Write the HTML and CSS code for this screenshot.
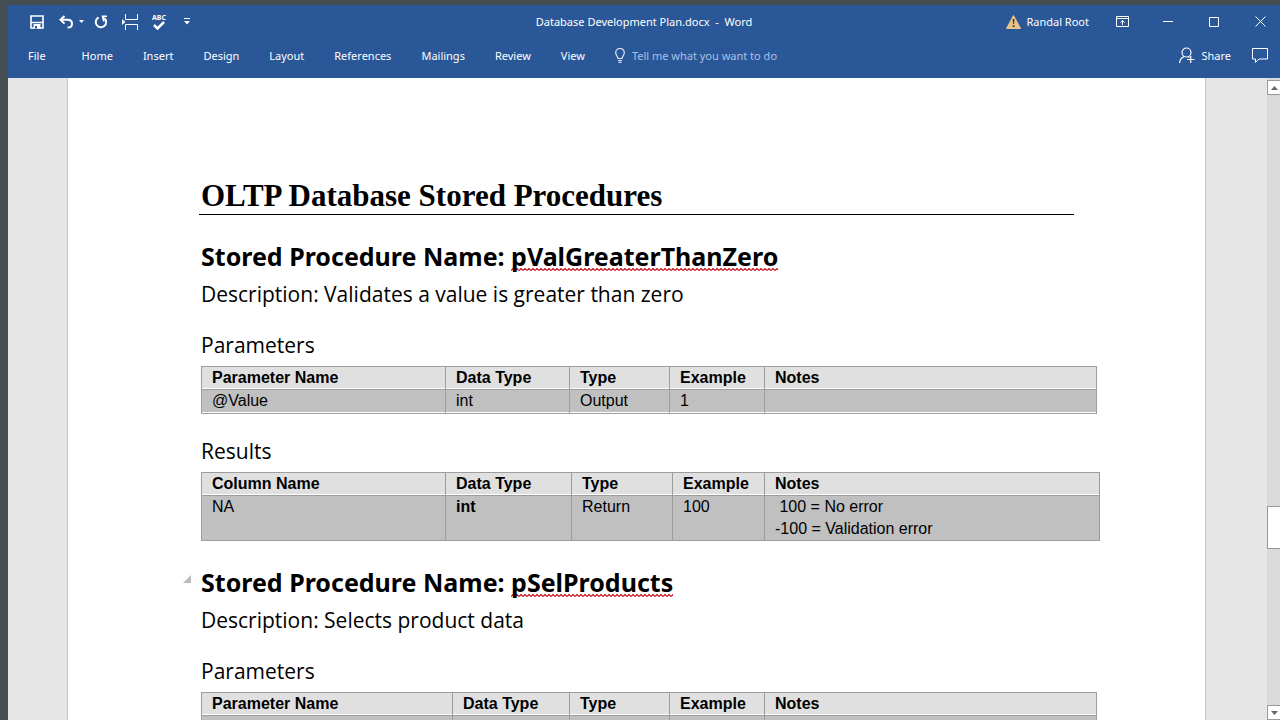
FILE: index.html
```html
<!DOCTYPE html>
<html lang="en">
<head>
    <meta charset="UTF-8">
    <meta name="viewport" content="width=device-width, initial-scale=1.0">
    <title>Database Development Plan.docx - Word</title>
    <link rel="stylesheet" href="styles.css">
</head>
<body>
    <div class="window">
        <header class="title-bar">
            <div class="quick-access">
                <button class="save" aria-label="Save">
                    <svg width="14" height="14" viewBox="0 0 14 14"><path d="M1 1h12v12H1z M1 7.500h12" fill="none" stroke="#fff" stroke-width="1.600"/><path d="M3.500 9h7v4.500h-7z" fill="#fff"/><path d="M5 11h2v2.500H5z" fill="#2a5797"/></svg>
                </button>
                <button class="undo" aria-label="Undo">
                    <svg width="16" height="14" viewBox="0 0 16 14"><path d="M6.500 1L2.500 4.800l4 3.800M3 4.800h6.500c3 0 4.500 1.600 4.500 3.900s-1.700 3.900-4.500 3.900" fill="none" stroke="#fff" stroke-width="2"/></svg>
                </button>
                <button class="undo-more" aria-label="Undo list">
                    <svg width="5" height="3" viewBox="0 0 5 3"><path d="M0 0h5L2.500 3z" fill="#fff"/></svg>
                </button>
                <button class="redo" aria-label="Repeat">
                    <svg width="14" height="14" viewBox="0 0 14 14"><path d="M4.500 2.500A5.200 5.200 0 1 0 10.500 3.300" fill="none" stroke="#fff" stroke-width="2"/><path d="M7.500 0.500H13V2h-2.500v4.500H9z" fill="#fff"/></svg>
                </button>
                <button class="break" aria-label="Page break">
                    <svg width="17" height="16" viewBox="0 0 17 16"><path d="M3.500 0v5.500h12V0 M3.500 16V10.500h12V16" fill="none" stroke="#fff"/><path d="M0 5l3.500 3L0 11z" fill="#fff"/></svg>
                </button>
                <button class="spelling" aria-label="Spelling">
                    <span class="abc">ABC</span>
                    <svg width="12" height="9" viewBox="0 0 12 9"><path d="M1 4l3.500 3.500L11 1" fill="none" stroke="#fff" stroke-width="2.500"/></svg>
                </button>
                <button class="customize" aria-label="Customize toolbar">
                    <svg width="6" height="7" viewBox="0 0 6 7"><path d="M0 .5h6" stroke="#fff"/><path d="M0 3h6L3 6.500z" fill="#fff"/></svg>
                </button>
            </div>
            <div class="doc-title">Database Development Plan.docx&nbsp; -&nbsp; Word</div>
            <div class="title-right">
                <button class="account">
                    <svg width="15" height="14" viewBox="0 0 15 14"><path d="M7.500.5L14.500 13.500H.5z" fill="#e8c48a" stroke="#e8c48a" stroke-linejoin="round"/><path d="M6.700 4h1.800l-.4 5h-1z M6.700 10.200h1.800v1.800H6.700z" fill="#3f3a36"/></svg>
                    Randal Root
                </button>
                <button class="win-btn" aria-label="Ribbon display options">
                    <svg width="13" height="11" viewBox="0 0 13 11"><path d="M.5.5h12v10H.5z M.5 2.500h12 M6.500 9V4.500 M4.500 6.500l2-2 2 2" fill="none" stroke="#fff"/></svg>
                </button>
                <button class="win-btn" aria-label="Minimize">
                    <svg width="10" height="11" viewBox="0 0 10 11"><path d="M0 5.500h10" stroke="#fff"/></svg>
                </button>
                <button class="win-btn" aria-label="Maximize">
                    <svg width="10" height="10" viewBox="0 0 10 10"><path d="M.5.5h9v9h-9z" fill="none" stroke="#fff"/></svg>
                </button>
                <button class="win-btn" aria-label="Close">
                    <svg width="11" height="11" viewBox="0 0 11 11"><path d="M.5.5l10 10M10.500.5l-10 10" stroke="#fff"/></svg>
                </button>
            </div>
        </header>

        <nav class="ribbon">
            <button class="file-tab">File</button>
            <button>Home</button>
            <button>Insert</button>
            <button>Design</button>
            <button>Layout</button>
            <button>References</button>
            <button>Mailings</button>
            <button>Review</button>
            <button>View</button>
            <label class="tell-me">
                <svg width="10" height="15" viewBox="0 0 10 15"><path d="M3 10.500C3 8.500.7 7.500.7 4.700a4.300 4.300 0 0 1 8.600 0C9.300 7.500 7 8.500 7 10.500z M3 12.500h4 M3.500 14.300h3" fill="none" stroke="#dce6f4" stroke-width="1.200"/></svg>
                <input type="text" placeholder="Tell me what you want to do" aria-label="Tell me what you want to do">
            </label>
            <button class="share">
                <svg width="16" height="17" viewBox="0 0 16 17"><circle cx="7.500" cy="5.500" r="4.500" fill="none" stroke="#fff" stroke-width="1.200"/><path d="M.6 16c.2-3.500 2-5.500 4.700-6.300M9 9.500l1.500 1 M8 12.500h7.500 M11.700 9v7" fill="none" stroke="#fff" stroke-width="1.200"/></svg>
                Share
            </button>
            <button class="comments" aria-label="Comments">
                <svg width="16" height="15" viewBox="0 0 16 15"><path d="M.5.5h15v10.500H7L3.500 14.300V11h-3z" fill="none" stroke="#fff"/></svg>
            </button>
        </nav>

        <main class="canvas">
            <article class="page">
                <h1>OLTP Database Stored Procedures</h1>

                <section>
                    <h2>Stored Procedure Name: <span class="misspelled">pValGreaterThanZero</span></h2>
                    <p>Description: Validates a value is greater than zero</p>
                    <h3>Parameters</h3>
                    <table class="params">
                        <colgroup><col class="w-244"><col class="w-124"><col class="w-100"><col class="w-95"><col></colgroup>
                        <thead>
                            <tr><th>Parameter Name</th><th>Data Type</th><th>Type</th><th>Example</th><th>Notes</th></tr>
                        </thead>
                        <tbody>
                            <tr><td>@Value</td><td>int</td><td>Output</td><td>1</td><td></td></tr>
                        </tbody>
                    </table>
                    <h3>Results</h3>
                    <table class="results">
                        <colgroup><col class="w-244"><col class="w-126"><col class="w-101"><col class="w-92"><col></colgroup>
                        <thead>
                            <tr><th>Column Name</th><th>Data Type</th><th>Type</th><th>Example</th><th>Notes</th></tr>
                        </thead>
                        <tbody>
                            <tr><td>NA</td><td><b>int</b></td><td>Return</td><td>100</td><td>&nbsp;100 = No error<br>-100 = Validation error</td></tr>
                        </tbody>
                    </table>
                </section>

                <section>
                    <h2><button class="collapse" aria-label="Collapse section"></button>Stored Procedure Name: <span class="misspelled">pSelProducts</span></h2>
                    <p>Description: Selects product data</p>
                    <h3>Parameters</h3>
                    <table class="params">
                        <colgroup><col class="w-251"><col class="w-117"><col class="w-100"><col class="w-95"><col></colgroup>
                        <thead>
                            <tr><th>Parameter Name</th><th>Data Type</th><th>Type</th><th>Example</th><th>Notes</th></tr>
                        </thead>
                        <tbody>
                            <tr><td>@ProductID</td><td>int</td><td>Output</td><td>1</td><td>Default = Null</td></tr>
                        </tbody>
                    </table>
                </section>
            </article>
            <div class="scrollbar">
                <button aria-label="Scroll up"><svg width="7" height="4" viewBox="0 0 7 4"><path d="M0 4h7L3.500 0z" fill="#666"/></svg></button>
                <div class="track"><div class="thumb"></div></div>
                <button aria-label="Scroll down"><svg width="7" height="4" viewBox="0 0 7 4"><path d="M0 0h7L3.500 4z" fill="#666"/></svg></button>
            </div>
        </main>
    </div>
</body>
</html>
```
FILE: styles.css
```css
* {
    box-sizing: border-box;
}
body {
    margin: 0;
    height: 100vh;
    padding: 5px 0 0 8px;
    overflow: hidden;
    background: #444e52;
    font-family: "Noto Sans", "Open Sans", sans-serif;
}
button {
    padding: 0;
    border: none;
    background: none;
    color: inherit;
    font: inherit;
    cursor: pointer;
}
svg {
    display: block;
}
.window {
    display: flex;
    flex-direction: column;
    height: 100%;
    overflow: hidden;
    background: #2a5797;
    color: #fff;
    font-size: 11px;
}

/* title bar */
.title-bar {
    display: grid;
    grid-template-columns: 1fr auto 1fr;
    align-items: center;
    height: 33px;
}
.quick-access {
    display: flex;
    align-items: center;
    padding-left: 22px;
}
.undo {
    margin-left: 14px;
}
.undo-more {
    margin-left: 5px;
}
.redo {
    margin-left: 10px;
}
.break {
    margin-left: 14px;
}
.spelling {
    display: flex;
    flex-direction: column;
    align-items: center;
    margin-left: 13px;
}
.abc {
    font-size: 7px;
    font-weight: bold;
    line-height: 7px;
}
.customize {
    margin-left: 18px;
}
.title-right {
    display: flex;
    justify-content: flex-end;
    align-items: center;
    margin-right: -3px;
}
.account {
    display: flex;
    align-items: center;
    gap: 5px;
    margin-right: 10px;
}
.win-btn {
    display: flex;
    justify-content: center;
    align-items: center;
    width: 46px;
    height: 32px;
}

/* ribbon tabs */
.ribbon {
    display: flex;
    align-items: center;
    gap: 30px;
    height: 40px;
    padding: 0 12px 5px 20px;
}
.file-tab {
    margin-right: 6px;
}
.tell-me {
    display: flex;
    flex: 1;
    align-items: center;
    gap: 7px;
}
.tell-me input {
    flex: 1;
    padding: 0;
    border: none;
    outline: none;
    background: none;
    color: #fff;
    font: inherit;
}
.tell-me input::placeholder {
    color: #a9c1e6;
}
.share {
    display: flex;
    align-items: center;
    gap: 6px;
}
.comments {
    margin-left: -9px;
}

/* document */
.canvas {
    display: flex;
    flex: 1;
    min-height: 0;
    padding-left: 59px;
    background: #e6e6e6;
}
.page {
    flex: 1;
    margin-right: 61px;
    padding: 100px 131px 0 133px;
    overflow: hidden;
    border: solid #c6c6c6;
    border-width: 0 1px;
    background: #fff;
    color: #000;
}
h1 {
    margin: 0 0 23px -2px;
    padding-left: 2px;
    border-bottom: 1px solid #000;
    font: bold 31px/36px "Liberation Serif", serif;
}
h2 {
    position: relative;
    margin: 0;
    font-size: 25px;
    line-height: 36px;
}
p, h3 {
    margin: 0;
    font-family: "Open Sans", "Noto Sans", sans-serif;
    font-size: 21px;
    font-weight: normal;
    line-height: 40px;
}
h3 {
    margin: 15px 0 5px;
    line-height: 32px;
}
.misspelled {
    background: url("data:image/svg+xml,%3Csvg xmlns='http://www.w3.org/2000/svg' width='4' height='3'%3E%3Cpath d='M0 2.500L2 .5L4 2.500' fill='none' stroke='%23c8101c' stroke-width='1.200'/%3E%3C/svg%3E") repeat-x left bottom 2px;
}
.collapse {
    position: absolute;
    left: -18px;
    top: 11px;
    width: 8px;
    height: 8px;
    background: #bbb;
    clip-path: polygon(100% 0, 100% 100%, 0 100%);
}

table {
    border-collapse: collapse;
    table-layout: fixed;
    font: 16px/22px "Liberation Sans Narrow", "Arial Narrow", "Liberation Sans", sans-serif;
}
.params {
    width: calc(100% + 23px);
    margin-bottom: 21px;
}
.results {
    width: calc(100% + 26px);
    margin-bottom: 23px;
}
th, td {
    padding: 0 10px;
    border: 1px solid #9d9d9d;
    text-align: left;
    vertical-align: top;
}
th {
    background: #e0e0e0;
    box-shadow: inset 0 -1px #fff;
}
td {
    height: 24px;
    background: #c0c0c0;
}
.params td {
    box-shadow: inset 0 -1px #fff;
}
.w-92 { width: 92px; }
.w-95 { width: 95px; }
.w-100 { width: 100px; }
.w-101 { width: 101px; }
.w-117 { width: 117px; }
.w-124 { width: 124px; }
.w-126 { width: 126px; }
.w-244 { width: 244px; }
.w-251 { width: 251px; }

/* scrollbar */
.scrollbar {
    display: flex;
    flex-direction: column;
    width: 13px;
    padding-top: 2px;
    background: #dadada;
}
.scrollbar button {
    display: flex;
    justify-content: center;
    align-items: center;
    height: 15px;
    border: 1px solid #999;
    border-right: none;
    background: #fff;
}
.track {
    flex: 1;
    padding-top: 411px;
}
.thumb {
    height: 43px;
    border: 1px solid #999;
    border-right: none;
    background: #fff;
}
```
